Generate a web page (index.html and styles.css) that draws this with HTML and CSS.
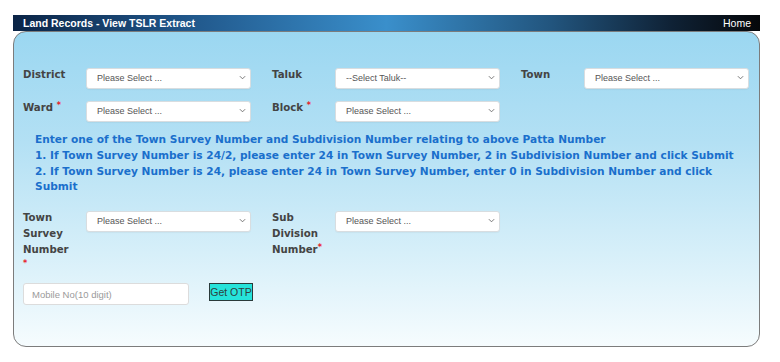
FILE: index.html
```html
<!DOCTYPE html>
<html>
<head>
<meta charset="utf-8">
<title>Land Records - View TSLR Extract</title>
<link rel="stylesheet" href="styles.css">
</head>
<body>
<div class="page">
  <div class="titlebar">
    <span class="title">Land Records - View TSLR Extract</span>
    <a class="home" href="#">Home</a>
  </div>
  <div class="panel">
    <div class="row">
      <div class="field">
        <label class="lbl">District</label>
        <div class="sel"><select><option>Please Select ...</option></select><svg class="chev" viewBox="0 0 8 5"><path d="M1 1l3 3 3-3" fill="none" stroke="#666" stroke-width="1"/></svg></div>
      </div>
      <div class="field">
        <label class="lbl">Taluk</label>
        <div class="sel"><select><option>--Select Taluk--</option></select><svg class="chev" viewBox="0 0 8 5"><path d="M1 1l3 3 3-3" fill="none" stroke="#666" stroke-width="1"/></svg></div>
      </div>
      <div class="field">
        <label class="lbl">Town</label>
        <div class="sel"><select><option>Please Select ...</option></select><svg class="chev" viewBox="0 0 8 5"><path d="M1 1l3 3 3-3" fill="none" stroke="#666" stroke-width="1"/></svg></div>
      </div>
    </div>
    <div class="row">
      <div class="field">
        <label class="lbl">Ward <span class="req">*</span></label>
        <div class="sel"><select><option>Please Select ...</option></select><svg class="chev" viewBox="0 0 8 5"><path d="M1 1l3 3 3-3" fill="none" stroke="#666" stroke-width="1"/></svg></div>
      </div>
      <div class="field">
        <label class="lbl">Block <span class="req">*</span></label>
        <div class="sel"><select><option>Please Select ...</option></select><svg class="chev" viewBox="0 0 8 5"><path d="M1 1l3 3 3-3" fill="none" stroke="#666" stroke-width="1"/></svg></div>
      </div>
    </div>
    <div class="info">
      <p>Enter one of the Town Survey Number and Subdivision Number relating to above Patta Number</p>
      <p>1. If Town Survey Number is 24/2, please enter 24 in Town Survey Number, 2 in Subdivision Number and click Submit</p>
      <p>2. If Town Survey Number is 24, please enter 24 in Town Survey Number, enter 0 in Subdivision Number and click Submit</p>
    </div>
    <div class="row row-survey">
      <div class="field">
        <label class="lbl narrow">Town Survey Number <span class="req own-line">*</span></label>
        <div class="sel"><select><option>Please Select ...</option></select><svg class="chev" viewBox="0 0 8 5"><path d="M1 1l3 3 3-3" fill="none" stroke="#666" stroke-width="1"/></svg></div>
      </div>
      <div class="field">
        <label class="lbl narrow">Sub Division Number<span class="req">*</span></label>
        <div class="sel"><select><option>Please Select ...</option></select><svg class="chev" viewBox="0 0 8 5"><path d="M1 1l3 3 3-3" fill="none" stroke="#666" stroke-width="1"/></svg></div>
      </div>
    </div>
    <div class="otp-row">
      <input class="mobile" type="text" placeholder="Mobile No(10 digit)">
      <button class="otp" type="button">Get OTP</button>
    </div>
  </div>
</div>
</body>
</html>
```

FILE: styles.css
```css
html, body {
  margin: 0;
  padding: 0;
  background: #ffffff;
}

.page {
  margin: 15px 20px 0 13px;
  width: 747px;
}

.titlebar {
  height: 16px;
  display: flex;
  align-items: center;
  justify-content: space-between;
  padding: 0 9px 0 10px;
  background: linear-gradient(to right, #0b2446 0%, #1f5487 22%, #3a8fcb 50%, #22557e 72%, #0f2236 88%, #05070a 100%);
  font-family: "Liberation Sans", Arial, sans-serif;
  font-size: 10.5px;
  color: #ffffff;
}

.title {
  font-weight: bold;
}

.home {
  color: #ffffff;
  text-decoration: none;
  font-size: 10.5px;
}

.panel {
  box-sizing: border-box;
  height: 316px;
  border: 1px solid #7c7c7c;
  border-radius: 13px;
  background: linear-gradient(to bottom, #9bd7f1 0%, #b3e0f4 35%, #d6eff9 70%, #f6fcfe 100%);
  padding: 35px 0 0 9px;
}

.row {
  display: flex;
  margin-bottom: 12px;
}

.field {
  display: flex;
  align-items: flex-start;
  width: 249px;
  flex: none;
}

.lbl {
  width: 63px;
  flex: none;
  font-family: "DejaVu Sans", Verdana, sans-serif;
  font-weight: bold;
  font-size: 10.2px;
  line-height: 16px;
  color: #444444;
}

.lbl.narrow {
  width: 56px;
  margin-right: 7px;
}

.req {
  color: #e8202a;
  font-size: 8px;
  vertical-align: top;
  line-height: 12px;
}

.req.own-line {
  display: block;
  line-height: 12px;
}

.sel {
  position: relative;
  width: 165px;
  height: 21px;
}

.sel select {
  appearance: none;
  -webkit-appearance: none;
  box-sizing: border-box;
  width: 165px;
  height: 21px;
  margin: 0;
  padding: 0 0 0 10px;
  border: 1px solid #d8dde0;
  border-radius: 3px;
  background: #ffffff;
  box-shadow: 0 1px 1px rgba(0, 0, 0, 0.04);
  font-family: "Liberation Sans", Arial, sans-serif;
  font-size: 9px;
  color: #555555;
  outline: none;
}

.chev {
  position: absolute;
  right: 5px;
  top: 8px;
  width: 7px;
  height: 5px;
  pointer-events: none;
}

.info {
  margin: -1px 10px 0 12px;
  padding-right: 8px;
  font-family: "DejaVu Sans", Verdana, sans-serif;
  font-weight: bold;
  font-size: 10.6px;
  line-height: 15.8px;
  color: #1a6fcc;
}

.info p {
  margin: 0;
}

.row-survey {
  margin-top: 15px;
  margin-bottom: 13px;
}

.otp-row {
  display: flex;
  align-items: flex-start;
  gap: 20px;
}

.mobile {
  box-sizing: border-box;
  width: 166px;
  height: 22px;
  margin: 0;
  padding: 0 8px;
  border: 1px solid #dcdcdc;
  border-radius: 3px;
  background: #ffffff;
  font-family: "Liberation Sans", Arial, sans-serif;
  font-size: 9.5px;
  color: #333;
  outline: none;
}

.mobile::placeholder {
  color: #9a9a9a;
}

.otp {
  box-sizing: border-box;
  width: 44px;
  height: 18px;
  margin: 0;
  padding: 0;
  border: 1px solid #2a3a3a;
  border-radius: 0;
  background: #26e3da;
  font-family: "Liberation Sans", Arial, sans-serif;
  font-size: 10.5px;
  color: #2f4040;
  line-height: 16px;
  white-space: nowrap;
  overflow: visible;
}
```
